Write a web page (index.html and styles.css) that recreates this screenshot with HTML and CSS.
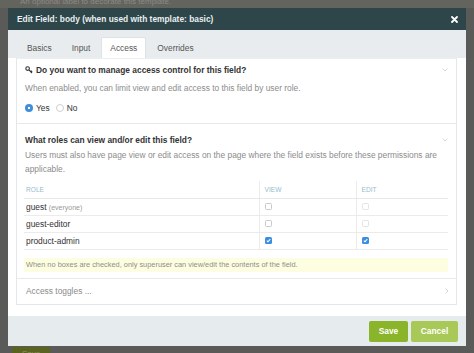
FILE: index.html
```html
<!DOCTYPE html>
<html>
<head>
<meta charset="utf-8">
<link rel="stylesheet" href="styles.css">
</head>
<body>
<div class="bg-label">An optional label to decorate this template.</div>
<div class="modal">
  <div class="modal-header">
    <span class="modal-title">Edit Field: body (when used with template: basic)</span>
    <svg class="close" width="7" height="7" viewBox="0 0 7 7"><path d="M1 1L6 6M6 1L1 6" stroke="#fff" stroke-width="1.8" stroke-linecap="round"/></svg>
  </div>
  <div class="tabs">
    <div class="tab">Basics</div>
    <div class="tab">Input</div>
    <div class="tab active">Access</div>
    <div class="tab">Overrides</div>
  </div>
  <div class="modal-body">
    <div class="panel">
      <div class="section s1">
        <div class="sec-head">
          <div class="sec-title">
            <svg class="key" width="8" height="8" viewBox="0 0 8 8"><circle cx="2.6" cy="2.6" r="1.8" fill="none" stroke="#333" stroke-width="1.1"/><path d="M3.9 3.9L7 7M5.6 5.6L6.6 4.6M6.3 6.3L7.2 5.4" stroke="#333" stroke-width="1.1"/></svg>
            <span>Do you want to manage access control for this field?</span>
          </div>
          <svg class="chev" width="6" height="4" viewBox="0 0 6 4"><path d="M0.5 0.5L3 3L5.5 0.5" fill="none" stroke="#d4d4d4" stroke-width="0.9"/></svg>
        </div>
        <div class="desc">When enabled, you can limit view and edit access to this field by user role.</div>
        <div class="radios">
          <span class="radio on"></span><span class="rlabel">Yes</span>
          <span class="radio"></span><span class="rlabel">No</span>
        </div>
      </div>
      <div class="section s2">
        <div class="sec-head">
          <div class="sec-title"><span>What roles can view and/or edit this field?</span></div>
          <svg class="chev" width="6" height="4" viewBox="0 0 6 4"><path d="M0.5 0.5L3 3L5.5 0.5" fill="none" stroke="#d4d4d4" stroke-width="0.9"/></svg>
        </div>
        <div class="desc desc2">Users must also have page view or edit access on the page where the field exists before these permissions are applicable.</div>
        <table class="roles">
          <thead>
            <tr><th class="c-role">Role</th><th class="c-view">View</th><th class="c-edit">Edit</th></tr>
          </thead>
          <tbody>
            <tr><td>guest <span class="muted">(everyone)</span></td><td class="cb-cell"><span class="cb"></span></td><td class="cb-cell"><span class="cb faint"></span></td></tr>
            <tr><td>guest-editor</td><td class="cb-cell"><span class="cb"></span></td><td class="cb-cell"><span class="cb faint"></span></td></tr>
            <tr><td>product-admin</td><td class="cb-cell"><span class="cb checked"><svg width="7" height="7" viewBox="0 0 7 7"><path d="M1.8 3.6L3 4.8L5.3 2.2" fill="none" stroke="#fff" stroke-width="1.1"/></svg></span></td><td class="cb-cell"><span class="cb checked"><svg width="7" height="7" viewBox="0 0 7 7"><path d="M1.8 3.6L3 4.8L5.3 2.2" fill="none" stroke="#fff" stroke-width="1.1"/></svg></span></td></tr>
          </tbody>
        </table>
        <div class="note">When no boxes are checked, only superuser can view/edit the contents of the field.</div>
      </div>
      <div class="section s3">
        <span class="toggles">Access toggles ...</span>
        <svg class="chev" width="4" height="6" viewBox="0 0 4 6"><path d="M0.5 0.5L3 3L0.5 5.5" fill="none" stroke="#d4d4d4" stroke-width="0.9"/></svg>
      </div>
    </div>
  </div>
  <div class="modal-footer">
    <button class="btn save">Save</button>
    <button class="btn cancel">Cancel</button>
  </div>
</div>
<div class="bg-save">Save</div>
</body>
</html>
```

FILE: styles.css
```css
* { box-sizing: border-box; }
html, body {
  margin: 0;
  padding: 0;
}
body {
  background: #5a5a58;
  font-family: "Liberation Sans", Arial, sans-serif;
  font-size: 8.4px;
  color: #333;
  width: 474px;
  height: 353px;
  overflow: hidden;
}
.bg-label {
  height: 8px;
  line-height: 4px;
  padding-left: 20px;
  color: #8a8a86;
  font-size: 8px;
  overflow: hidden;
  background: #64645f;
}
.modal {
  margin-left: 8px;
  width: 458px;
  display: flex;
  flex-direction: column;
  background: #fff;
}
.modal-header {
  height: 22px;
  background: #2e4549;
  display: flex;
  align-items: center;
  justify-content: space-between;
  padding: 0 8px 0 9px;
}
.modal-title {
  color: #e8f0f1;
  font-weight: bold;
  font-size: 8.4px;
}
.close { display: block; }
.tabs {
  height: 28px;
  background: #e8ecee;
  display: flex;
  align-items: flex-end;
  gap: 2px;
  padding-left: 10px;
}
.tab {
  height: 21px;
  padding: 0 8px;
  display: flex;
  align-items: center;
  color: #555;
  font-size: 8.4px;
  border: 1px solid transparent;
  border-bottom: none;
}
.tab.active {
  background: #fff;
  border-color: #dde2e4;
  border-radius: 2px 2px 0 0;
}
.modal-body {
  padding: 0 9px 11px 8px;
  background: #fff;
}
.panel {
  border: 1px solid #e4e7e9;
  border-top-color: #eceff0;
}
.section {
  padding: 0 8px;
}
.s1 {
  padding-top: 5px;
  padding-bottom: 9px;
  border-bottom: 1px solid #e7eaec;
}
.s2 {
  padding-top: 10px;
  padding-bottom: 6px;
  border-bottom: 1px solid #e7eaec;
}
.s3 {
  height: 25px;
  display: flex;
  align-items: center;
  justify-content: space-between;
  padding-left: 9px;
  padding-right: 7px;
}
.sec-head {
  display: flex;
  justify-content: space-between;
  align-items: center;
  height: 12px;
}
.sec-title {
  display: flex;
  align-items: center;
  gap: 3px;
  font-weight: bold;
  color: #333;
}
.key { display: block; }
.chev { display: block; }
.desc {
  color: #8c8c8c;
  margin-top: 6px;
  line-height: 12px;
  font-size: 8.4px;
}
.desc2 {
  margin-top: 2px;
  line-height: 14px;
}
.radios {
  margin-top: 8px;
  height: 12px;
  display: flex;
  align-items: center;
}
.radio {
  width: 8px;
  height: 8px;
  border-radius: 50%;
  border: 1px solid #cfcfcf;
  background: #fff;
  display: inline-block;
}
.radio.on {
  border: none;
  background: radial-gradient(circle, #fff 0 1.3px, #3d8edb 1.6px);
}
.rlabel {
  margin-left: 3px;
  margin-right: 6px;
  color: #333;
}
.roles {
  margin-top: 5px;
  margin-left: -1px;
  width: 424px;
  border-collapse: collapse;
}
.roles th {
  height: 17px;
  text-align: left;
  font-weight: normal;
  text-transform: uppercase;
  font-size: 6.6px;
  color: #93bccb;
  padding: 0 0 0 2px;
  border-bottom: 1px solid #e8e8e8;
}
.roles td {
  height: 17px;
  padding: 0 0 0 2px;
  border-bottom: 1px solid #ebebeb;
  color: #333;
}
.c-role { width: 235px; }
.c-view { width: 97px; }
.roles th + th, .roles td + td {
  border-left: 1px solid #ebebeb;
  padding-left: 5px;
}
.muted {
  color: #999;
  font-size: 7px;
}
.cb {
  width: 7px;
  height: 7px;
  border: 1px solid #c9c9c9;
  border-radius: 1.5px;
  display: block;
  background: #fff;
}
.cb.faint { border-color: #e4e4e4; }
.cb.checked {
  border: none;
  background: #3a8de2;
}
.cb svg { display: block; }
.note {
  margin-top: 8px;
  margin-left: -1px;
  width: 424px;
  height: 14px;
  line-height: 14px;
  background: #fdfde2;
  color: #8f8f86;
  font-size: 7.4px;
  padding-left: 2px;
}
.toggles {
  color: #8a8a8a;
}
.modal-footer {
  height: 30px;
  background: #e6ebed;
  display: flex;
  justify-content: flex-end;
  align-items: center;
  gap: 3px;
  padding-right: 8px;
}
.btn {
  height: 21px;
  border: none;
  border-radius: 2px;
  color: #fff;
  font-family: "Liberation Sans", Arial, sans-serif;
  font-weight: bold;
  font-size: 8.4px;
  padding: 0;
}
.save { width: 39px; background: #8ab52b; margin-top: 1px; }
.cancel { width: 47px; background: #a8c857; margin-top: 1px; }
.bg-save {
  margin-left: 12px;
  margin-top: 1px;
  width: 38px;
  height: 10px;
  background: #5b6320;
  color: #8e9460;
  font-size: 8px;
  line-height: 14px;
  padding-left: 10px;
  overflow: hidden;
}
```
